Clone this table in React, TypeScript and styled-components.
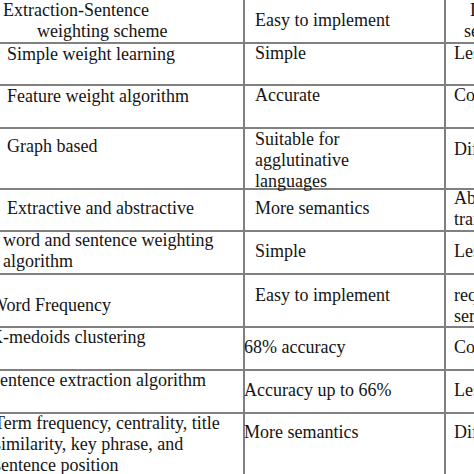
import React from 'react'
import styled, { createGlobalStyle } from 'styled-components'

const GlobalStyle = createGlobalStyle`
  html, body {
    margin: 0;
    padding: 0;
    background: #fff;
    overflow: hidden;
  }
`

const Sheet = styled.div`
  width: 474px;
  height: 474px;
  overflow: hidden;
  background: #fff;
  font-family: 'Liberation Serif', 'Times New Roman', serif;
  font-size: 18px;
  line-height: 21px;
  color: #141414;
`

const Table = styled.div`
  display: grid;
  grid-template-columns: 245px 201px 220px;
  grid-template-rows: 44px 42px 43px 61px 42px 43px 53px 43px 43px 80px;
`

const Cell = styled.div<{ $col: number; $last?: boolean }>`
  box-sizing: border-box;
  border-bottom: ${({ $last }) => ($last ? 'none' : '2px solid #808080')};
  border-right: ${({ $col }) => ($col < 2 ? '2px solid #808080' : 'none')};
  white-space: nowrap;
`

const Text = styled.div<{ $top: number; $left: number }>`
  margin-top: ${({ $top }) => $top}px;
  margin-left: ${({ $left }) => $left}px;
`

const Line = styled.div<{ $indent?: number }>`
  padding-left: ${({ $indent }) => $indent ?? 0}px;
`

type LineData = string | [string, number]
type CellData = { lines: LineData[]; top: number; left: number }

const rows: CellData[][] = [
  [
    { lines: ['Extraction-Sentence', ['weighting scheme', 34]], top: 0, left: 3 },
    { lines: ['Easy to implement'], top: 10, left: 10 },
    { lines: [['Drawbacks', 24], ['seen', 18]], top: 0, left: 0 },
  ],
  [
    { lines: ['Simple weight learning'], top: 0, left: 7 },
    { lines: ['Simple'], top: -1, left: 10 },
    { lines: ['Less accuracy'], top: -1, left: 8 },
  ],
  [
    { lines: ['Feature weight algorithm'], top: 0, left: 7 },
    { lines: ['Accurate'], top: -1, left: 10 },
    { lines: ['Complex'], top: -1, left: 8 },
  ],
  [
    { lines: ['Graph based'], top: 7, left: 7 },
    { lines: ['Suitable for', 'agglutinative', 'languages'], top: 0, left: 10 },
    { lines: ['Difficult to scale'], top: 10, left: 8 },
  ],
  [
    { lines: ['Extractive and abstractive'], top: 8, left: 7 },
    { lines: ['More semantics'], top: 8, left: 10 },
    { lines: ['Abstractive', 'translation'], top: -2, left: 8 },
  ],
  [
    { lines: ['word and sentence weighting', 'algorithm'], top: -2, left: 3 },
    { lines: ['Simple'], top: 9, left: 10 },
    { lines: ['Less accuracy'], top: 9, left: 8 },
  ],
  [
    { lines: ['Word Frequency'], top: 20, left: -9 },
    { lines: ['Easy to implement'], top: 10, left: 10 },
    { lines: ['requires', 'semantics'], top: 10, left: 8 },
  ],
  [
    { lines: ['K-medoids clustering'], top: -1, left: -10 },
    { lines: ['68% accuracy'], top: 9, left: -1 },
    { lines: ['Computationally costly'], top: 9, left: 8 },
  ],
  [
    { lines: ['Sentence extraction algorithm'], top: -1, left: -10 },
    { lines: ['Accuracy up to 66%'], top: 9, left: -1 },
    { lines: ['Less accurate'], top: 9, left: 8 },
  ],
  [
    {
      lines: [['Term frequency, centrality, title', -1], 'similarity, key phrase, and', 'sentence position'],
      top: -1,
      left: -6,
    },
    { lines: ['More semantics'], top: 8, left: -1 },
    { lines: ['Difficult to implement'], top: 8, left: 8 },
  ],
]

const App = () => {
  return (
    <>
      <GlobalStyle />
      <Sheet>
        <Table>
          {rows.map((row, r) =>
            row.map((cell, c) => (
              <Cell key={`${r}-${c}`} $col={c} $last={r === rows.length - 1}>
                <Text $top={cell.top} $left={cell.left}>
                  {cell.lines.map((line, i) =>
                    typeof line === 'string' ? (
                      <Line key={i}>{line}</Line>
                    ) : (
                      <Line key={i} $indent={line[1]}>
                        {line[0]}
                      </Line>
                    )
                  )}
                </Text>
              </Cell>
            ))
          )}
        </Table>
      </Sheet>
    </>
  )
}

export default App
